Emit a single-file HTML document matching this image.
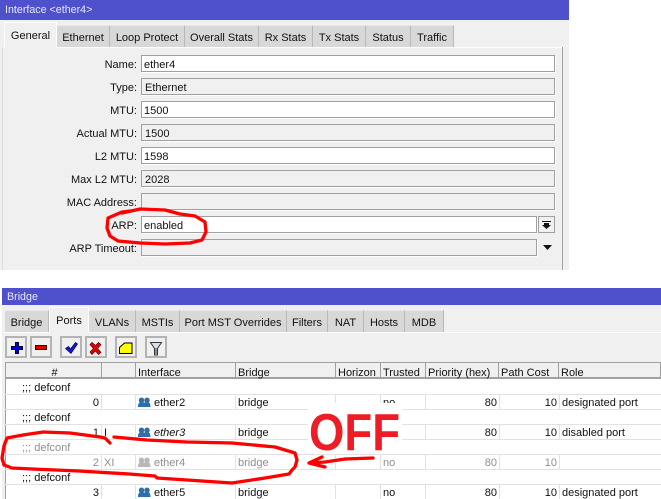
<!DOCTYPE html>
<html><head><meta charset="utf-8">
<style>
html,body{margin:0;padding:0;background:#fff}
#r{position:relative;width:661px;height:499px;overflow:hidden;background:#fff;font:11px/13px "Liberation Sans",sans-serif;color:#111}
#r div{position:absolute;box-sizing:border-box;white-space:nowrap}
.tb{background:#4f50cc;color:#e8e8f8;font-size:10.7px;line-height:21px;padding-left:5px}
.tab{top:25px;height:22px;background:#d8d8d8;border-right:1px solid #b8b8b8;border-top:1px solid #e8e8e8;text-align:center;line-height:25px;font-size:11px}
.act{background:#f0f0f0;border:1px solid #fff;border-bottom:0;text-align:center;line-height:26px;font-size:11px}
.l{left:0;width:137px;text-align:right;height:17px;line-height:20px;font-size:11px}
.f{left:141px;width:414px;height:17px;border:1px solid #a0a0a0;padding-left:2px;line-height:18px;background:#fff;font-size:11px;box-shadow:1px 1px 0 #fff}
.g{background:#f0f0f0;padding-left:3px}
.btn{top:336px;width:22px;height:22px;background:#f0f0f0;border:2px solid #b4b4b4}
.th{top:362px;height:17px;border-top:1px solid #a0a0a0;border-bottom:2px solid #a0a0a0;border-right:1px solid #a0a0a0;background:#f0f0f0;line-height:20px;padding-left:2px;font-size:11px}
.hl{left:5px;width:656px;height:1px;background:#e2e2e2}
.t{height:15px;line-height:16px;font-size:11px}
.d{color:#8f8f8f}
.c{left:22px}
.n{left:59px;width:40px;text-align:right}
.p{left:440px;width:57px;text-align:right}
.q{left:500px;width:57px;text-align:right}
</style></head>
<body><div id="r">

<div style="left:0;top:20px;width:569px;height:250px;background:#f0f0f0"></div>
<div class="tb" style="left:0;top:0;width:569px;height:20px">Interface &lt;ether4&gt;</div>
<div style="left:3px;top:47px;width:559px;height:1px;background:#fff"></div>
<div style="left:2px;top:47px;width:1px;height:223px;background:#dcdcdc"></div>
<div style="left:562px;top:47px;width:1px;height:223px;background:#a0a0a0"></div>

<div class="act" style="left:4px;top:22px;width:53px;height:26px">General</div>
<div class="tab" style="left:57px;width:53px">Ethernet</div>
<div class="tab" style="left:110px;width:75px">Loop Protect</div>
<div class="tab" style="left:185px;width:74px">Overall Stats</div>
<div class="tab" style="left:259px;width:54px">Rx Stats</div>
<div class="tab" style="left:313px;width:53px">Tx Stats</div>
<div class="tab" style="left:366px;width:45px">Status</div>
<div class="tab" style="left:411px;width:43px">Traffic</div>

<div class="l" style="top:55px">Name:</div><div class="f" style="top:55px">ether4</div>
<div class="l" style="top:78px">Type:</div><div class="f g" style="top:78px">Ethernet</div>
<div class="l" style="top:101px">MTU:</div><div class="f" style="top:101px">1500</div>
<div class="l" style="top:124px">Actual MTU:</div><div class="f g" style="top:124px">1500</div>
<div class="l" style="top:147px">L2 MTU:</div><div class="f" style="top:147px">1598</div>
<div class="l" style="top:170px">Max L2 MTU:</div><div class="f g" style="top:170px">2028</div>
<div class="l" style="top:193px">MAC Address:</div><div class="f g" style="top:193px"></div>
<div class="l" style="top:216px">ARP:</div><div class="f" style="top:216px;width:396px">enabled</div>
<div style="left:538px;top:216px;width:17px;height:17px;border:1px solid #a0a0a0;background:#f0f0f0"></div>
<svg style="position:absolute;left:538px;top:216px" width="17" height="17"><path d="M4 5h9v1H4zM6 7h5v2h2l-4.500 4L4 9h2z" fill="#111"/></svg>
<div class="l" style="top:239px">ARP Timeout:</div><div class="f g" style="top:239px;width:396px"></div>
<svg style="position:absolute;left:542px;top:244px" width="12" height="8"><path d="M1 1h9L5.500 6z" fill="#111"/></svg>

<div style="left:2px;top:305px;width:659px;height:194px;background:#f0f0f0"></div>
<div class="tb" style="left:2px;top:288px;width:659px;height:17px;line-height:18px;padding-left:5px">Bridge</div>
<div style="left:3px;top:332px;width:658px;height:1px;background:#fff"></div>

<div class="tab" style="left:5px;top:310px;width:44px">Bridge</div>
<div class="act" style="left:49px;top:307px;width:40px;height:26px">Ports</div>
<div class="tab" style="left:89px;top:310px;width:47px">VLANs</div>
<div class="tab" style="left:136px;top:310px;width:44px">MSTIs</div>
<div class="tab" style="left:180px;top:310px;width:107px">Port MST Overrides</div>
<div class="tab" style="left:287px;top:310px;width:41px">Filters</div>
<div class="tab" style="left:328px;top:310px;width:36px">NAT</div>
<div class="tab" style="left:364px;top:310px;width:41px">Hosts</div>
<div class="tab" style="left:405px;top:310px;width:39px">MDB</div>

<div class="btn" style="left:5px"></div>
<div class="btn" style="left:30px"></div>
<div class="btn" style="left:60px"></div>
<div class="btn" style="left:85px"></div>
<div class="btn" style="left:115px"></div>
<div class="btn" style="left:145px"></div>
<svg style="position:absolute;left:0;top:332px" width="175" height="30">
<path d="M15.500 10.500h3v4h4v3h-4v4h-3v-4h-4v-3h4z" fill="#0000e0" stroke="#000030" stroke-width="1"/>
<path d="M35.500 13.500h11v4h-11z" fill="#e00000" stroke="#400000" stroke-width="1"/>
<path d="M65.500 16.500l3-2 2 2.500 5-6.500 2 1.500-6.500 9.500z" fill="#1818c8" stroke="#000060" stroke-width=".7"/>
<path d="M90 12.500l2-2 3.500 3 3-3 2.500 2-3.500 4 3.500 4-2.500 2-3-3.500-3.500 3.500-2-2.500 3.500-3.500z" fill="#e80000" stroke="#500000" stroke-width=".7"/>
<path d="M119.500 15.500l5-4.500h7.500v10.500h-12.500z" fill="#ffff00" stroke="#000" stroke-width="1"/>
<path d="M150.500 10.500h11l-4 6v6.500h-3v-6.500z" fill="#d8e0e8" stroke="#333" stroke-width="1"/>
<path d="M155 16h2v7h-2z" fill="#8090a0"/>
</svg>

<div style="left:5px;top:362px;width:656px;height:137px;background:#fff;border-left:1px solid #a0a0a0"></div>
<div class="th" style="left:5px;width:97px;text-align:center;border-left:1px solid #a0a0a0">#</div>
<div class="th" style="left:102px;width:34px"></div>
<div class="th" style="left:136px;width:100px">Interface</div>
<div class="th" style="left:236px;width:100px">Bridge</div>
<div class="th" style="left:336px;width:45px">Horizon</div>
<div class="th" style="left:381px;width:45px">Trusted</div>
<div class="th" style="left:426px;width:73px">Priority (hex)</div>
<div class="th" style="left:499px;width:60px">Path Cost</div>
<div class="th" style="left:559px;width:102px">Role</div>

<div class="hl" style="top:394px"></div><div class="hl" style="top:409px"></div>
<div class="hl" style="top:424px"></div><div class="hl" style="top:439px"></div>
<div class="hl" style="top:454px"></div><div class="hl" style="top:469px"></div>
<div class="hl" style="top:484px"></div>
<svg style="position:absolute;left:0;top:0" width="661" height="499">
<g stroke="#e2e2e2" stroke-width="1">
<path d="M101.500 394v15M135.500 394v15M235.500 394v15M335.500 394v15M380.500 394v15M425.500 394v15M499.500 394v15M559.500 394v15"/>
<path d="M101.500 424v15M135.500 424v15M235.500 424v15M335.500 424v15M380.500 424v15M425.500 424v15M499.500 424v15M559.500 424v15"/>
<path d="M101.500 454v15M135.500 454v15M235.500 454v15M335.500 454v15M380.500 454v15M425.500 454v15M499.500 454v15M559.500 454v15"/>
<path d="M101.500 484v15M135.500 484v15M235.500 484v15M335.500 484v15M380.500 484v15M425.500 484v15M499.500 484v15M559.500 484v15"/>
</g>
</svg>

<div class="t c" style="top:380px">;;; defconf</div>
<div class="t n" style="top:395px">0</div>
<div class="t" style="left:154px;top:395px">ether2</div>
<div class="t" style="left:238px;top:395px">bridge</div>
<div class="t" style="left:383px;top:395px">no</div>
<div class="t p" style="top:395px">80</div><div class="t q" style="top:395px">10</div>
<div class="t" style="left:562px;top:395px">designated port</div>

<div class="t c" style="top:410px">;;; defconf</div>
<div class="t n" style="top:425px">1</div>
<div class="t" style="left:104px;top:425px">I</div>
<div class="t" style="left:154px;top:425px;font-style:italic">ether3</div>
<div class="t" style="left:238px;top:425px">bridge</div>
<div class="t p" style="top:425px">80</div><div class="t q" style="top:425px">10</div>
<div class="t" style="left:562px;top:425px">disabled port</div>

<div class="t c d" style="top:440px">;;; defconf</div>
<div class="t n d" style="top:455px">2</div>
<div class="t d" style="left:104px;top:455px">XI</div>
<div class="t d" style="left:154px;top:455px">ether4</div>
<div class="t d" style="left:238px;top:455px">bridge</div>
<div class="t d" style="left:383px;top:455px">no</div>
<div class="t p d" style="top:455px">80</div><div class="t q d" style="top:455px">10</div>

<div class="t c" style="top:470px">;;; defconf</div>
<div class="t n" style="top:485px">3</div>
<div class="t" style="left:154px;top:485px">ether5</div>
<div class="t" style="left:238px;top:485px">bridge</div>
<div class="t" style="left:383px;top:485px">no</div>
<div class="t p" style="top:485px">80</div><div class="t q" style="top:485px">10</div>
<div class="t" style="left:562px;top:485px">designated port</div>

<div style="left:308px;top:403px;width:94px;height:51px;background:#fff"></div>

<svg style="position:absolute;left:0;top:0" width="661" height="499">
<defs><g id="u"><circle cx="3.500" cy="2.700" r="2.700"/><circle cx="9" cy="2.700" r="2.700"/><path d="M0 9.500c0-3.500 1-5 3.500-5 1.200 0 2.200 .2 2.800 .7.600-.5 1.500-.7 2.700-.7 2.500 0 3.500 1.500 3.500 5z"/></g></defs>
<use href="#u" x="138" y="397.500" fill="#2f6ea8"/>
<use href="#u" x="138" y="427.500" fill="#2f6ea8"/>
<use href="#u" x="138" y="457.500" fill="#b8b8b8"/>
<use href="#u" x="138" y="487.500" fill="#2f6ea8"/>

<g fill="none" stroke="#f00" stroke-width="3.300" stroke-linecap="round" stroke-linejoin="round">
<path d="M130 211l-8 1-14 6-1 10 3 8 8 5 22 2 25 1 25-1 12-3 4-8-1-10-10-6-15-2-15-4-25-1-18 4"/>
<path d="M110 443l-5-5-5-1-30-4-27-1-20 3-16 3-3 8-2 12 2 7 8 3 20 1 47 2 50 3 26 2 2 2 45 3 30 2 33-5 24-4 3-4 3-3 2-7-2-7-20-6-43-4-45-1-40-2-33-3"/>
<path d="M373 458l-28 1-20 3-15 1M322 457l-13 6 16 4"/>
</g>
<text x="309" y="450" font-family="Liberation Sans,sans-serif" font-weight="700" font-size="52" fill="#ee1c25" textLength="91" lengthAdjust="spacingAndGlyphs">OFF</text>
</svg>
</div></body></html>
